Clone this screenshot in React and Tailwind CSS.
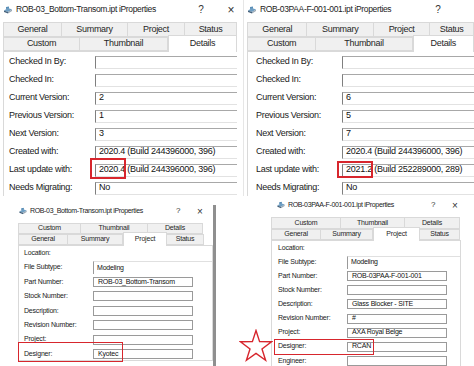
import React from "react";

const FONT = "font-['Liberation_Sans',Arial,sans-serif]";

function PartIcon() {
  return (
    <svg width="10" height="8" viewBox="0 0 10 8">
      <path d="M1 4.5 L5 2 L9 3.5 L5 6 Z" fill="#6f9fc4" />
      <path d="M1 4.5 L5 6 L5 7.5 L1 6 Z" fill="#44607a" />
      <path d="M5 6 L9 3.5 L9 5 L5 7.5 Z" fill="#9aa8b4" />
      <path d="M3 1 L6 0.5 L6 2.5 L3 3 Z" fill="#5a8fb8" />
    </svg>
  );
}

function Tabs({ rows, size }) {
  return (
    <div className="flex flex-col">
      {rows.map((row, i) => (
        <div key={i} className="flex" style={{ height: row.h }}>
          {row.tabs.map((t) => (
            <div
              key={t.label}
              style={{ width: t.w }}
              className={`flex items-center justify-center whitespace-nowrap border border-[#d9d9d9] text-[#262626] ${size} ${
                t.active ? "relative z-10 -mt-[2px] -mb-[1px] border-b-0 bg-white" : "-ml-px first:ml-0 bg-[#f0f0f0]"
              }`}
            >
              {t.label}
            </div>
          ))}
        </div>
      ))}
    </div>
  );
}

function TopDialog({ title, tabs, rows, labelPad, showClose, mark, className }) {
  return (
    <div className={`flex h-[196px] flex-col overflow-hidden bg-white ${className}`}>
      <div className="flex h-[19px] shrink-0 items-center pl-[3px]">
        <PartIcon />
        <span className="ml-[3px] flex-1 whitespace-nowrap text-[8.5px] tracking-[-0.35px] text-[#222]">{title}</span>
        <span className="w-[12px] text-center text-[10px] text-[#333]">?</span>
        <span className={`ml-[18px] w-[12px] text-center text-[12px] text-[#333] ${showClose ? "" : "invisible"}`}>×</span>
      </div>
      <div className="mt-[3px] pl-[3px]">
        <Tabs rows={tabs} size="text-[9px] tracking-[-0.3px]" />
        <div className="h-[146px] border-l border-t border-[#d9d9d9] bg-white pt-px">
          {rows.map(([label, value], i) => (
            <div key={label} className="flex h-[18px] items-center" style={{ paddingLeft: labelPad }}>
              <span className="w-[86px] shrink-0 whitespace-nowrap text-[9px] tracking-[-0.3px] text-[#1a1a1a]">{label}</span>
              <div className="relative flex h-[13px] flex-1 items-center whitespace-nowrap border-l border-t border-b border-l-[#7f7f7f] border-t-[#a8a8a8] border-b-[#e2e2e2] bg-white pl-[3px] text-[9px] tracking-[-0.25px] text-[#111]">
                {value}
                {mark && i === 6 && (
                  <div
                    className="absolute border-2 border-[#d7262d]"
                    style={{ left: mark.left, top: mark.top, width: mark.w, height: mark.h }}
                  />
                )}
              </div>
            </div>
          ))}
        </div>
      </div>
    </div>
  );
}

function BottomDialog({ title, tabs, rows, pitch, labelPad, mark, className, titleH, tabsTop, iconPad, qPos, closeVisible, contentH }) {
  return (
    <div className={`flex flex-col bg-white ${className}`}>
      <div className="flex shrink-0 items-center" style={{ height: titleH, paddingLeft: iconPad }}>
        <div className="scale-90">
          <PartIcon />
        </div>
        <span className="ml-[2px] whitespace-nowrap text-[7px] tracking-[-0.35px] text-[#222]">{title}</span>
        <span className="absolute text-[8px] text-[#333]" style={{ left: qPos }}>?</span>
        {closeVisible && (
          <span className="absolute text-[10px] text-[#333]" style={{ left: qPos + 21 }}>×</span>
        )}
      </div>
      <div style={{ marginTop: tabsTop }}>
        <Tabs rows={tabs} size="text-[7px] tracking-[-0.2px]" />
        <div className="border border-[#d9d9d9] bg-white" style={{ height: contentH }}>
          {rows.map(([label, value, kind], i) => (
            <div key={label} className="relative flex items-center" style={{ height: pitch, paddingLeft: labelPad }}>
              <span className="w-[69px] shrink-0 whitespace-nowrap text-[7px] tracking-[-0.2px] text-[#1a1a1a]">{label}</span>
              {kind === "field" && (
                <div className="flex h-[10px] w-[100px] items-center whitespace-nowrap border border-[#9a9a9a] bg-white pl-[4px] text-[7px] tracking-[-0.2px] text-[#111]">
                  {value}
                </div>
              )}
              {kind === "plain" && (
                <div className="flex h-[13px] flex-1 items-center whitespace-nowrap border-l border-t border-l-[#9a9a9a] border-t-[#e0e0e0] pl-[3px] text-[7px] tracking-[-0.2px] text-[#111]">
                  {value}
                </div>
              )}
              {mark && i === 7 && (
                <div
                  className="absolute border-[1.5px] border-[#d7262d]"
                  style={{ left: mark.left, top: mark.top, width: mark.w, height: mark.h }}
                />
              )}
            </div>
          ))}
        </div>
      </div>
    </div>
  );
}

const detailRows = (v) => [
  ["Checked In By:", ""],
  ["Checked In:", ""],
  ["Current Version:", v[0]],
  ["Previous Version:", v[1]],
  ["Next Version:", v[2]],
  ["Created with:", "2020.4 (Build 244396000, 396)"],
  ["Last update with:", v[3]],
  ["Needs Migrating:", "No"],
];

export default function App() {
  return (
    <div className={`relative h-[366px] w-[474px] overflow-hidden bg-white ${FONT}`}>
      <div className="flex">
        <TopDialog
          className="w-[237px]"
          title="ROB-03_Bottom-Transom.ipt iProperties"
          showClose
          labelPad={5}
          tabs={[
            { h: 15, tabs: [{ label: "General", w: 59 }, { label: "Summary", w: 67 }, { label: "Project", w: 58 }, { label: "Status", w: 53 }] },
            { h: 14, tabs: [{ label: "Custom", w: 77 }, { label: "Thumbnail", w: 89 }, { label: "Details", w: 69, active: true }] },
          ]}
          rows={detailRows(["2", "1", "3", "2020.4 (Build 244396000, 396)"])}
          mark={{ left: -6, top: -7, w: 36, h: 21 }}
        />
        <div className="w-[6px]" />
        <TopDialog
          className="flex-1 border-l border-[#e6e6e6]"
          title="ROB-03PAA-F-001-001.ipt iProperties"
          labelPad={8}
          tabs={[
            { h: 15, tabs: [{ label: "General", w: 61 }, { label: "Summary", w: 68 }, { label: "Project", w: 58 }, { label: "Status", w: 45 }] },
            { h: 14, tabs: [{ label: "Custom", w: 70 }, { label: "Thumbnail", w: 98 }, { label: "Details", w: 62, active: true }] },
          ]}
          rows={detailRows(["6", "5", "7", "2021.2 (Build 252289000, 289)"])}
          mark={{ left: -6, top: -4, w: 36, h: 17 }}
        />
      </div>

      <div className="flex">
        <div className="relative ml-[15px] mt-[7px] flex w-[201px]">
          <BottomDialog
            className="w-[198px] pl-[3px]"
            title="ROB-03_Bottom-Transom.ipt iProperties"
            titleH={16}
            tabsTop={4}
            iconPad={0}
            qPos={161}
            closeVisible
            labelPad={5}
            pitch={14.4}
            contentH={116}
            tabs={[
              { h: 11, tabs: [{ label: "Custom", w: 63 }, { label: "Thumbnail", w: 68 }, { label: "Details", w: 56 }] },
              { h: 11, tabs: [{ label: "General", w: 50 }, { label: "Summary", w: 56 }, { label: "Project", w: 44, active: true }, { label: "Status", w: 38 }] },
            ]}
            rows={[
              ["Location:", "", "none"],
              ["File Subtype:", "Modeling", "plain"],
              ["Part Number:", "ROB-03_Bottom-Transom", "field"],
              ["Stock Number:", "", "field"],
              ["Description:", "", "field"],
              ["Revision Number:", "", "field"],
              ["Project:", "", "field"],
              ["Designer:", "Kyotec", "field"],
            ]}
            mark={{ left: -1, top: -5, w: 105, h: 20 }}
          />
          <div className="mb-[3px] mt-[2px] w-[3px] bg-[#8f8f8f]" />
        </div>
        <div className="relative ml-[50px] mt-[2px] w-[195px] overflow-hidden">
          <BottomDialog
            className="w-[195px] pl-[5px]"
            title="ROB-03PAA-F-001-001.ipt iProperties"
            titleH={14}
            tabsTop={5}
            iconPad={5}
            qPos={165}
            closeVisible
            labelPad={6}
            pitch={14.1}
            contentH={130}
            tabs={[
              { h: 12, tabs: [{ label: "Custom", w: 70 }, { label: "Thumbnail", w: 65 }, { label: "Details", w: 56 }] },
              { h: 11, tabs: [{ label: "General", w: 50 }, { label: "Summary", w: 53 }, { label: "Project", w: 47, active: true }, { label: "Status", w: 41 }] },
            ]}
            rows={[
              ["Location:", "", "none"],
              ["File Subtype:", "Modeling", "plain"],
              ["Part Number:", "ROB-03PAA-F-001-001", "field"],
              ["Stock Number:", "", "field"],
              ["Description:", "Glass Blocker - SITE", "field"],
              ["Revision Number:", "#", "field"],
              ["Project:", "AXA Royal Belge", "field"],
              ["Designer:", "RCAN", "field"],
              ["Engineer:", "", "field"],
            ]}
            mark={{ left: 2, top: -1, w: 100, h: 16 }}
          />
        </div>
      </div>

      <svg className="absolute left-[239px] top-[329px]" width="34" height="36" viewBox="0 0 34 36">
        <path
          d="M17 1.5 L20.6 12.6 L32.5 12.7 L23 19.9 L26.6 31.3 L17 24.4 L7.4 31.3 L11 19.9 L1.5 12.7 L13.4 12.6 Z"
          fill="none"
          stroke="#d7262d"
          strokeWidth="1.4"
          strokeLinejoin="miter"
        />
      </svg>
    </div>
  );
}
